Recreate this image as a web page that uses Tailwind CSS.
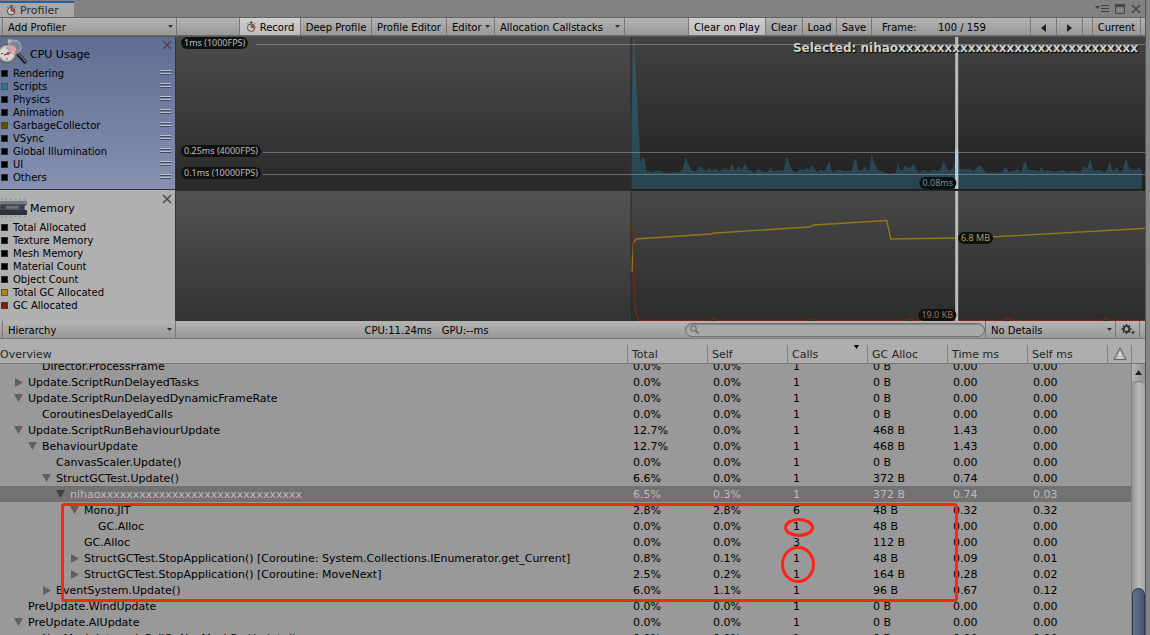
<!DOCTYPE html>
<html lang="en">
<head>
<meta charset="utf-8">
<title>Profiler</title>
<script src="https://cdn.jsdelivr.net/npm/@tailwindcss/browser@4"></script>
</head>
<body class="bg-[#858585]">
<svg class="hidden" aria-hidden="true">
  <symbol id="watch" viewBox="0 0 12 13"><path d="M5 0h3v2H5z" fill="#444"/><path d="M1.500 3l1.500-1.200M10.500 2l1 1" stroke="#444"/><circle cx="6.200" cy="7.300" r="4.500" fill="#c9c9c9" stroke="#4a4a4a" stroke-width="1.200"/><path d="M6.200 7.300V3.500a3.800 3.800 0 0 1 3.300 5.200z" fill="#c33"/><path d="M6.200 3.500v3.800" stroke="#733" /></symbol>
  <symbol id="down" viewBox="0 0 5 3"><path d="M0 0h5L2.500 3z" fill="#333"/></symbol>
  <symbol id="cross" viewBox="0 0 10 10"><path d="M1 1l8 8M9 1l-8 8" stroke="#474747" stroke-width="1.500" fill="none"/></symbol>
  <symbol id="grip" viewBox="0 0 11 5"><path d="M0 .5h11M0 3.500h11" stroke="#b9bfcc"/><path d="M0 1.500h11M0 4.500h11" stroke="#454b5e"/></symbol>
</svg>

<div class="relative flex h-screen flex-col overflow-hidden pr-[5px] font-['DejaVu_Sans',sans-serif] text-[10px] leading-[13px] text-black">

  <!-- Window tab -->
  <header class="flex h-[18px] shrink-0 items-end justify-between border-b border-[#636363] bg-[#828282]">
    <div class="flex h-4 w-[74px] items-center gap-1 border-t-2 border-[#2c5c9e] bg-[#a9a9a9] pl-[6px] pt-px text-[11px] text-[#2b2b2b]">
      <svg class="h-[11px] w-[10px]"><use href="#watch"/></svg>Profiler
    </div>
    <div class="flex h-full items-center gap-[6px] pr-1">
      <button aria-label="Menu"><svg class="h-[9px] w-[14px]" viewBox="0 0 14 9"><path d="M0 2h5L2.500 5z" fill="#3d3d3d"/><path d="M6 1.500h8M6 4.500h8M6 7.500h8" stroke="#3d3d3d"/></svg></button>
      <button aria-label="Maximize"><svg class="h-[10px] w-[10px]" viewBox="0 0 10 10"><path d="M.5.500h9v9h-9z" fill="none" stroke="#474747"/><path d="M0 0h10v3H0z" fill="#474747"/></svg></button>
      <button aria-label="Close"><svg class="h-[10px] w-[10px]"><use href="#cross"/></svg></button>
    </div>
  </header>

  <!-- Main toolbar -->
  <div class="flex h-[18px] shrink-0 border-b border-[#6c6c6c] bg-linear-to-b from-[#b3b3b3] to-[#999] pl-[2px] [&_button]:pt-[2px] [&_select]:pt-[2px]">
    <div class="relative w-[175px] border-x border-[#777]">
      <select aria-label="Add Profiler" class="h-full w-full appearance-none pl-[5px]"><option>Add Profiler</option></select>
      <svg class="pointer-events-none absolute right-[3px] top-[7px] h-[3px] w-[5px]"><use href="#down"/></svg>
    </div>
    <div class="w-[62px]"></div>
    <button class="flex w-[62px] items-center justify-center gap-1 border-x border-[#777] bg-linear-to-b from-[#cfcfcf] to-[#bdbdbd]"><svg class="mb-px h-[12px] w-[10px]"><use href="#watch"/></svg>Record</button>
    <button class="w-[71px] whitespace-nowrap border-r border-[#777]">Deep Profile</button>
    <button class="w-[75px] whitespace-nowrap border-r border-[#777]">Profile Editor</button>
    <div class="relative w-[48px] border-r border-[#777]">
      <select aria-label="Connected player" class="h-full w-full appearance-none pl-[5px]"><option>Editor</option></select>
      <svg class="pointer-events-none absolute right-[4px] top-[7px] h-[3px] w-[5px]"><use href="#down"/></svg>
    </div>
    <div class="relative w-[130px] border-r border-[#777]">
      <select aria-label="Allocation Callstacks" class="h-full w-full appearance-none pl-[5px]"><option>Allocation Callstacks</option></select>
      <svg class="pointer-events-none absolute right-[4px] top-[7px] h-[3px] w-[5px]"><use href="#down"/></svg>
    </div>
    <div class="flex-1"></div>
    <button class="w-[78px] whitespace-nowrap border-x border-[#777] bg-linear-to-b from-[#cfcfcf] to-[#bdbdbd]">Clear on Play</button>
    <button class="w-[37px] border-r border-[#777]">Clear</button>
    <button class="w-[34px] border-r border-[#777]">Load</button>
    <button class="w-[35px] border-r border-[#777]">Save</button>
    <div class="flex w-[159px] items-center border-r border-[#777] pl-[10px] pt-[2px]"><span class="w-[56px]">Frame:</span><span>100 / 159</span></div>
    <button aria-label="Previous frame" class="flex w-[26px] items-center justify-center border-r border-[#777]"><svg class="h-2 w-[5px]" viewBox="0 0 5 8"><path d="M5 0v8L0 4z" fill="#222"/></svg></button>
    <button aria-label="Next frame" class="flex w-[26px] items-center justify-center border-r border-[#777]"><svg class="h-2 w-[5px]" viewBox="0 0 5 8"><path d="M0 0v8l5-4z" fill="#222"/></svg></button>
    <div class="w-[10px] border-r border-[#777]"></div>
    <button class="w-[48px] border-r border-[#777]">Current</button>
    <div class="w-1"></div>
  </div>

  <!-- CPU module -->
  <section class="flex h-[154px] shrink-0 border-t border-[#555]">
    <div class="relative flex w-[176px] shrink-0 flex-col border-b border-r border-[#333] bg-linear-to-b from-[#5f6d92] to-[#8691b0]">
      <button aria-label="Remove CPU Usage" class="absolute right-[3px] top-[3px]"><svg class="h-[10px] w-[10px]"><use href="#cross"/></svg></button>
      <h2 class="flex h-[30px] items-center gap-[2px] text-[11px]">
        <svg class="h-[28px] w-[28px]" viewBox="0 0 28 28"><path d="M7 1l5 0 0 4-4 1z" fill="#bbb" stroke="#666" stroke-width=".7"/><path d="M17 15l9 10" stroke="#222" stroke-width="4"/><path d="M17 14l9 10" stroke="#999"/><circle cx="7" cy="15.500" r="9.500" fill="#8f9090" stroke="#555"/><circle cx="7" cy="15.500" r="7.500" fill="#d6d5d3"/><path d="M7 9.200v2M7 20v2M1 15.500h2" stroke="#666"/><path d="M9 13l0-6a7 7 0 0 1 8 6z" fill="#d98c8c"/><path d="M4 17l8-3" stroke="#a22" stroke-width="1.300"/><circle cx="8" cy="15.500" r="1.400" fill="#b33"/><circle cx="14.500" cy="9" r="6.500" fill="#fff" fill-opacity=".15" stroke="#a2a7b0" stroke-width="1.300"/></svg><span class="pt-1">CPU Usage</span>
      </h2>
      <ul id="cpuLegend"></ul>
    </div>
    <div class="relative min-w-0 flex-1">
      <svg class="block h-full w-full" viewBox="176 37 970 153" preserveAspectRatio="none">
        <defs>
          <linearGradient id="a" x2="0" y2="1"><stop stop-color="#4c4c4c"/><stop offset="1" stop-color="#292929"/></linearGradient>
          <linearGradient id="b" x2="0" y2="1"><stop stop-color="#424242"/><stop offset="1" stop-color="#202020"/></linearGradient>
          <linearGradient id="c" x2="0" y2="1"><stop stop-color="#35596a"/><stop offset="1" stop-color="#274450"/></linearGradient>
        </defs>
        <path d="M176 36h455v154H176z" fill="url(#a)"/><path d="M631 36h515v154H631z" fill="url(#b)"/><path d="M631.500 36v154" stroke="#262626"/>
        <g transform="translate(630 130) scale(.3333)">
          <path fill="url(#c)" d="M6 178V-16L9-156L11-276H15V-224L19-164L22-110L25-50L28 12L31 74L34 100L39 82H44L49 110L51 126L58 122L64 125L72 126L80 122H94L102 126L120 129L130 126H150L158 120L165 98L169 80L175 98L181 112L190 124L200 124L208 112L215 109L226 121L232 123L238 113L247 124L258 116L268 125L278 120L288 113L298 122L307 101L316 122L327 108L336 119L347 101L356 119L368 123L376 129L386 116L398 124L413 127L424 114L432 126L442 121L460 122L465 116L472 79L481 105L490 123L502 126L512 117L525 119L532 114L540 118L550 105L560 124L567 126L574 117L584 125L592 110L601 94L606 118L613 129L620 121L632 119L642 123L668 122L674 94L680 86L684 108L691 124L700 120L708 109L716 124L722 112L727 68L733 94L741 110L750 122L765 127L780 131L800 128L806 98L812 118L818 124L826 107L840 116L854 103L862 120L870 128L884 120L900 127L914 117L926 124L936 116L944 92L950 112L958 123L968 116L975 108L980 80L988 76L992 117H1022L1032 124L1042 114L1052 106L1062 117L1072 128L1120 127L1128 108L1137 126L1150 124L1166 117L1176 128L1183 102L1190 94L1196 120L1220 120L1230 124L1237 112L1246 126L1256 120L1276 125L1304 120L1314 128L1324 123L1344 124L1354 128L1364 108L1374 116L1382 90L1386 92L1392 122L1410 120L1428 126L1436 118L1442 92L1448 118L1454 124L1463 112L1472 126L1480 124L1487 98L1492 86L1498 108L1506 118L1522 119L1531 112L1539 122V178z"/>
        </g>
        <path d="M256 44.500h890M263 152.500h883M263 174.500h883" stroke="#b5b5b5" stroke-opacity=".45" fill="none"/>
        <path d="M631 189.500h515" stroke="#191919"/>
        <path d="M956 37h3v152h-3z" fill="#bcbcbc"/><path d="M956 149h3v40h-3z" fill="#b9ccd2"/>
      </svg>
      <span class="absolute left-[5px] top-0 rounded-full bg-[#111] px-[3px] font-['Noto_Sans',sans-serif] text-[9px] leading-3 text-[#bbb]">1ms (1000FPS)</span>
      <span class="absolute left-[5px] top-[108px] rounded-full bg-[#111] px-[3px] font-['Noto_Sans',sans-serif] text-[9px] leading-3 text-[#bbb]">0.25ms (4000FPS)</span>
      <span class="absolute left-[5px] top-[130px] rounded-full bg-[#111] px-[3px] font-['Noto_Sans',sans-serif] text-[9px] leading-3 text-[#bbb]">0.1ms (10000FPS)</span>
      <span class="absolute left-[80.500%] top-[140px] -translate-x-full rounded-full bg-[#0a1114] px-[3px] font-['Noto_Sans',sans-serif] text-[9px] leading-3 text-[#6f8e9b]">0.08ms</span>
      <p class="absolute right-[7px] top-1 whitespace-nowrap text-[12px] font-bold leading-[14px] text-[#cfcfcf] text-shadow-[1px_1px_1px_#000]">Selected: nihaoxxxxxxxxxxxxxxxxxxxxxxxxxxxxxxx</p>
    </div>
  </section>

  <!-- Memory module -->
  <section class="flex h-[131px] shrink-0">
    <div class="relative flex w-[176px] shrink-0 flex-col border-r border-[#333] bg-[#b0b0b0]">
      <button aria-label="Remove Memory" class="absolute right-[3px] top-1"><svg class="h-[10px] w-[10px]"><use href="#cross"/></svg></button>
      <h2 class="mt-1 flex h-[27px] items-center gap-[2px] text-[11px]">
        <svg class="h-[22px] w-[28px]" viewBox="0 0 28 22"><path d="M1 2.500h27M1 19.500h27" stroke="#989898" stroke-width="2" stroke-dasharray="2 2.500"/><path d="M0 4h27v4a2.500 3 0 0 0 0 6v4H0z" fill="#4c525a"/><path d="M0 4h27v3H0z" fill="#747a80"/><path d="M0 13h27v5H0z" fill="#2c323c"/><circle cx="3" cy="10.500" r="2.200" fill="#383d45"/><circle cx="22" cy="10.500" r="2.200" fill="#383d45"/><path d="M7 10.500h11" stroke="#858b92" stroke-width="2" stroke-dasharray="1.500 .6"/></svg><span class="pt-px">Memory</span>
      </h2>
      <ul id="memLegend"></ul>
    </div>
    <div class="relative min-w-0 flex-1">
      <svg class="block h-full w-full" viewBox="176 190 970 131" preserveAspectRatio="none">
        <defs>
          <linearGradient id="d" x2="0" y2="1"><stop stop-color="#535353"/><stop offset="1" stop-color="#333"/></linearGradient>
          <linearGradient id="e" x2="0" y2="1"><stop stop-color="#484848"/><stop offset="1" stop-color="#2c2c2c"/></linearGradient>
        </defs>
        <path d="M176 190h455v131H176z" fill="url(#d)"/><path d="M631 190h515v131H631z" fill="url(#e)"/><path d="M631.500 190v131M176 190.500h970" stroke="#262626"/>
        <path d="M632.500 272l1-29 3-4 75-5 4-1 94-6 5-2 73-4.500 4 18.500 64-1 45-1.500 143-8 47-2.500" fill="none" stroke="#91791a" stroke-width="1.300"/>
        <path d="M633 227L635 287L636 311L639 320.500H710L714 318.500L719 320.500H808L812 318.500L817 320.500H906L910 318.500L915 320.500H1004L1008 318.500L1013 320.500H1102L1106 318.500L1111 320.500H1146" fill="none" stroke="#732815" stroke-width="1.300"/>
        <path d="M956 191h3v130h-3z" fill="#bcbcbc"/>
      </svg>
      <span class="absolute left-[80.700%] top-[42px] rounded-full bg-[#111] px-[3px] font-['Noto_Sans',sans-serif] text-[9px] leading-3 text-[#a89d60]">6.8 MB</span>
      <span class="absolute left-[80.500%] top-[119px] -translate-x-full rounded-full bg-[#0f0f0f] px-[3px] font-['Noto_Sans',sans-serif] text-[9px] leading-3 text-[#a07468]">19.0 KB</span>
    </div>
  </section>

  <!-- Details toolbar -->
  <div class="flex h-[18px] shrink-0 border-b border-[#777] bg-linear-to-b from-[#b5b5b5] to-[#999] pl-[2px] [&_select]:pt-[2px]">
    <div class="relative w-[174px] border-x border-[#777]">
      <select aria-label="View" class="h-full w-full appearance-none pl-[5px]"><option>Hierarchy</option></select>
      <svg class="pointer-events-none absolute right-[3px] top-[7px] h-[3px] w-[5px]"><use href="#down"/></svg>
    </div>
    <p class="flex flex-1 items-center justify-center gap-[10px] pr-2 pt-[2px]"><span>CPU:11.24ms</span><span>GPU:--ms</span></p>
    <div class="relative flex w-[300px] items-center">
      <input type="search" aria-label="Search" class="h-[14px] w-full rounded-full border border-[#6d6d6d] bg-[#a9a9a9] pl-5 shadow-[inset_0_1px_1px_#888]">
      <svg class="absolute left-[5px] top-1 h-[9px] w-[9px]" viewBox="0 0 9 9"><circle cx="3.500" cy="3.500" r="2.800" fill="none" stroke="#5a5a5a"/><path d="M5.500 5.500l3 3" stroke="#5a5a5a" stroke-width="1.400"/></svg>
    </div>
    <div class="relative w-[131px] border-x border-[#777]">
      <select aria-label="Details" class="h-full w-full appearance-none pl-[5px]"><option>No Details</option></select>
      <svg class="pointer-events-none absolute right-[3px] top-[7px] h-[3px] w-[5px]"><use href="#down"/></svg>
    </div>
    <button aria-label="Options" class="flex w-[24px] items-center justify-center border-r border-[#777]"><svg class="h-[11px] w-[14px]" viewBox="0 0 14 11"><circle cx="5.500" cy="5" r="2.800" fill="none" stroke="#2f2f2f" stroke-width="1.800"/><path d="M5.500 0v2M5.500 8v2M.5 5h2M8.500 5h2M2 1.500l1.200 1.200M9 1.500L7.800 2.700M2 8.500l1.200-1.200M9 8.500L7.800 7.300" stroke="#2f2f2f" stroke-width="1.600"/><path d="M10 7.500h4l-2 3z" fill="#2f2f2f"/></svg></button>
    <div class="w-[5px]"></div>
  </div>

  <!-- Column headings -->
  <div role="row" class="flex h-[25px] shrink-0 items-end border-b border-[#777] bg-[#aeaeae] pt-1 text-[11px] text-[#262626]">
    <div role="columnheader" class="flex h-[18px] flex-1 items-center">Overview</div>
    <div role="columnheader" class="flex h-[18px] w-20 items-center border-l border-[#828282] pl-1">Total</div>
    <div role="columnheader" class="flex h-[18px] w-20 items-center border-l border-[#828282] pl-1">Self</div>
    <div role="columnheader" aria-sort="descending" class="relative flex h-[18px] w-20 items-center border-l border-[#828282] pl-1">Calls<svg class="absolute right-2 top-0 h-1 w-[5px]" viewBox="0 0 5 4"><path d="M0 0h5L2.500 4z"/></svg></div>
    <div role="columnheader" class="flex h-[18px] w-20 items-center border-l border-[#828282] pl-1">GC Alloc</div>
    <div role="columnheader" class="flex h-[18px] w-20 items-center border-l border-[#828282] pl-1">Time ms</div>
    <div role="columnheader" class="flex h-[18px] w-20 items-center border-l border-[#828282] pl-1">Self ms</div>
    <div role="columnheader" aria-label="Warnings" class="flex h-[18px] w-[25px] items-center justify-center border-x border-[#828282]"><svg class="h-[14px] w-[14px]" viewBox="0 0 14 14"><path d="M7 1l6 11.500H1z" fill="#bdbdbd" stroke="#666" stroke-width="1.200" stroke-linejoin="round"/><path d="M7 4.500v4M7 9.500v1.500" stroke="#eee" stroke-width="1.300"/></svg></div>
    <div class="w-[13px]"></div>
  </div>

  <!-- Samples -->
  <div class="flex min-h-0 flex-1 bg-[#999]">
    <div class="min-w-0 flex-1 overflow-hidden">
      <table class="-mt-[6px] w-full table-fixed border-collapse text-[11px] leading-[14px]">
        <colgroup><col><col class="w-20"><col class="w-20"><col class="w-20"><col class="w-20"><col class="w-20"><col class="w-[104px]"></colgroup>
        <tbody id="rows"></tbody>
      </table>
    </div>
    <div class="flex w-[14px] flex-col border-l border-[#808080] bg-[#a0a0a0]">
      <button aria-label="Scroll up" class="flex h-[17px] shrink-0 items-center justify-center bg-linear-to-r from-[#b5b5b5] to-[#929292]"><svg class="h-[5px] w-[7px]" viewBox="0 0 7 5"><path d="M0 5h7L3.500 0z" fill="#222"/></svg></button>
      <div class="flex min-h-0 flex-1 flex-col justify-end rounded-t-full border-t border-[#777] bg-linear-to-r from-[#949494] via-[#b8b8b8] to-[#a8a8a8]">
        <div class="h-[47px] rounded-t-full border border-b-0 border-[#2f3b4e] bg-linear-to-r from-[#66758f] to-[#46546c]"></div>
      </div>
    </div>
  </div>

  <!-- Highlights drawn over the samples -->
  <svg class="pointer-events-none absolute left-0 top-[500px] h-[110px] w-full" fill="none" stroke="#fb2416" stroke-width="3" aria-hidden="true">
    <rect x="62.500" y="4.500" width="894" height="96" rx="2"/>
    <ellipse cx="799" cy="27.500" rx="13.500" ry="8"/>
    <ellipse cx="798" cy="64.500" rx="15.500" ry="17"/>
  </svg>
  <div class="absolute inset-y-0 right-0 w-[5px] border-l border-[#555] bg-[#858585]"></div>
</div>

<script>
  const legend = (id, items, grip) => {
    document.getElementById(id).innerHTML = items.map(([name, color]) =>
      `<li class="flex h-[13px] items-center pl-px pr-[4px]"><button class="flex flex-1 items-center gap-[5px] leading-[13px]"><span class="h-[7px] w-[7px] border border-[#444a]" style="background:${color}"></span>${name}</button>${grip ? '<svg class="mb-[2px] h-[5px] w-[11px]"><use href="#grip"/></svg>' : ''}</li>`).join('');
  };
  legend('cpuLegend', [['Rendering', '#000'], ['Scripts', '#2a7590'], ['Physics', '#000'], ['Animation', '#000'], ['GarbageCollector', '#5c5208'], ['VSync', '#000'], ['Global Illumination', '#000'], ['UI', '#000'], ['Others', '#000']], true);
  legend('memLegend', [['Total Allocated', '#000'], ['Texture Memory', '#000'], ['Mesh Memory', '#000'], ['Material Count', '#000'], ['Object Count', '#000'], ['Total GC Allocated', '#a08a08'], ['GC Allocated', '#7c200a']], false);

  // [depth, fold state, name, total, self, calls, gc, time, self time]
  const data = [
    [2, '', 'Director.ProcessFrame', '0.0%', '0.0%', 1, '0 B', '0.00', '0.00'],
    [1, 'c', 'Update.ScriptRunDelayedTasks', '0.0%', '0.0%', 1, '0 B', '0.00', '0.00'],
    [1, 'o', 'Update.ScriptRunDelayedDynamicFrameRate', '0.0%', '0.0%', 1, '0 B', '0.00', '0.00'],
    [2, '', 'CoroutinesDelayedCalls', '0.0%', '0.0%', 1, '0 B', '0.00', '0.00'],
    [1, 'o', 'Update.ScriptRunBehaviourUpdate', '12.7%', '0.0%', 1, '468 B', '1.43', '0.00'],
    [2, 'o', 'BehaviourUpdate', '12.7%', '0.0%', 1, '468 B', '1.43', '0.00'],
    [3, '', 'CanvasScaler.Update()', '0.0%', '0.0%', 1, '0 B', '0.00', '0.00'],
    [3, 'o', 'StructGCTest.Update()', '6.6%', '0.0%', 1, '372 B', '0.74', '0.00'],
    [4, 'o', 'nihaoxxxxxxxxxxxxxxxxxxxxxxxxxxxxxxx', '6.5%', '0.3%', 1, '372 B', '0.74', '0.03'],
    [5, 'o', 'Mono.JIT', '2.8%', '2.8%', 6, '48 B', '0.32', '0.32'],
    [6, '', 'GC.Alloc', '0.0%', '0.0%', 1, '48 B', '0.00', '0.00'],
    [5, '', 'GC.Alloc', '0.0%', '0.0%', 3, '112 B', '0.00', '0.00'],
    [5, 'c', 'StructGCTest.StopApplication() [Coroutine: System.Collections.IEnumerator.get_Current]', '0.8%', '0.1%', 1, '48 B', '0.09', '0.01'],
    [5, 'c', 'StructGCTest.StopApplication() [Coroutine: MoveNext]', '2.5%', '0.2%', 1, '164 B', '0.28', '0.02'],
    [3, 'c', 'EventSystem.Update()', '6.0%', '1.1%', 1, '96 B', '0.67', '0.12'],
    [1, '', 'PreUpdate.WindUpdate', '0.0%', '0.0%', 1, '0 B', '0.00', '0.00'],
    [1, 'o', 'PreUpdate.AIUpdate', '0.0%', '0.0%', 1, '0 B', '0.00', '0.00'],
    [2, '', 'NavMesh.Internal_CallOnNavMeshPreUpdate()', '0.0%', '0.0%', 1, '0 B', '0.00', '0.00']
  ];
  document.getElementById('rows').innerHTML = data.map(([depth, fold, name, ...cells], i) => {
    const selected = i === 8;
    const arrow = fold === 'o' ? 'M0 0h9L4.500 8z' : fold === 'c' ? 'M1 0v9l8-4.500z' : '';
    return `<tr class="${selected ? 'h-4 bg-[#727272] text-[#bdbdbd]' : 'h-4'}"><td class="p-0"><div class="flex h-4 items-center whitespace-nowrap pt-[2px]" style="padding-left:${depth * 14}px"><svg class="mb-px h-[9px] w-[14px] shrink-0" fill="${selected ? '#404040' : '#606060'}"><path d="${arrow}"/></svg>${name}</div></td>` +
      cells.map(c => `<td class="p-0 pl-[6px] pt-[2px]">${c}</td>`).join('') + '</tr>';
  }).join('');
</script>
</body>
</html>
